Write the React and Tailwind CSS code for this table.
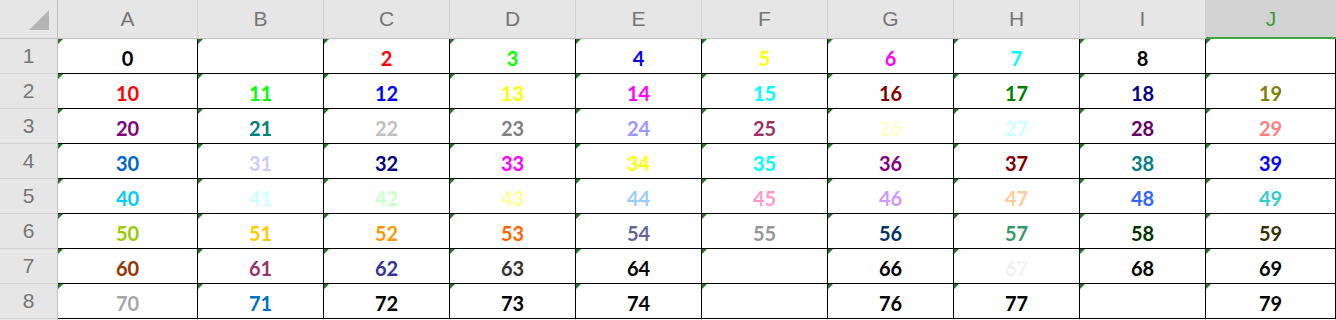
import React from 'react';

const cols = ['A', 'B', 'C', 'D', 'E', 'F', 'G', 'H', 'I', 'J'];

const rows = [
  ['#000000', '#ffffff', '#ff0000', '#00ff00', '#0000ff', '#ffff00', '#ff00ff', '#00ffff', '#000000', '#ffffff'],
  ['#ff0000', '#00ff00', '#0000ff', '#ffff00', '#ff00ff', '#00ffff', '#800000', '#008000', '#000080', '#808000'],
  ['#800080', '#008080', '#c0c0c0', '#808080', '#9999ff', '#993366', '#ffffcc', '#ccffff', '#660066', '#ff8080'],
  ['#0066cc', '#ccccff', '#000080', '#ff00ff', '#ffff00', '#00ffff', '#800080', '#800000', '#008080', '#0000ff'],
  ['#00ccff', '#ccffff', '#ccffcc', '#ffff99', '#99ccff', '#ff99cc', '#cc99ff', '#ffcc99', '#3366ff', '#33cccc'],
  ['#99cc00', '#ffcc00', '#ff9900', '#ff6600', '#666699', '#969696', '#003366', '#339966', '#003300', '#333300'],
  ['#993300', '#993366', '#333399', '#333333', '#000000', '#ffffff', '#000000', '#f2f2f2', '#000000', '#000000'],
  ['#a6a6a6', '#0070c0', '#000000', '#000000', '#000000', '#ffffff', '#000000', '#000000', '#ffffff', '#000000'],
];

function Cell({ value, color }) {
  return (
    <div className="relative h-[35px] border-r border-b border-black flex items-center justify-center pt-[3px]">
      <span className="absolute left-0 top-0 w-0 h-0 border-t-[5px] border-r-[5px] border-t-[#1e7b1e] border-r-transparent" />
      <span
        className="font-['Lato',sans-serif] font-bold text-[20px] leading-none"
        style={{ color }}
      >
        {value}
      </span>
    </div>
  );
}

export default function App() {
  return (
    <div className="w-[1336px] h-[320px] overflow-hidden bg-white">
      <div className="grid grid-cols-[58px_140px_repeat(8,126px)_1fr]">
        {/* corner */}
        <div className="h-[39px] bg-[#e6e6e6] border-r border-b border-[#c2c2c2] relative">
          <svg className="absolute left-[29px] top-[10px]" width="20" height="20" viewBox="0 0 20 20">
            <polygon points="20,0 20,20 0,20" fill="#b4b4b4" />
          </svg>
        </div>
        {cols.map((c) =>
          c === 'J' ? (
            <div
              key={c}
              className="h-[39px] bg-[#d2d2d2] border-b-2 border-[#3fa33f] flex items-center justify-center font-['Liberation_Sans',sans-serif] text-[21px] text-[#3a9a3a]"
            >
              {c}
            </div>
          ) : (
            <div
              key={c}
              className="h-[39px] bg-[#e6e6e6] border-r border-b border-r-[#d0d0d0] border-b-[#c2c2c2] flex items-center justify-center font-['Liberation_Sans',sans-serif] text-[21px] text-[#767676]"
            >
              {c}
            </div>
          )
        )}

        {rows.map((colors, r) => (
          <React.Fragment key={r}>
            <div className="h-[35px] bg-[#e6e6e6] border-r border-b border-r-[#c2c2c2] border-b-[#d4d4d4] flex items-center justify-center font-['Liberation_Sans',sans-serif] text-[21px] text-[#767676]">
              {r + 1}
            </div>
            {colors.map((color, c) => (
              <Cell key={c} value={String(r * 10 + c)} color={color} />
            ))}
          </React.Fragment>
        ))}

        <div className="h-[35px] bg-[#e6e6e6] border-r border-[#c2c2c2]" />
        {cols.map((c) => (
          <div key={c} className="h-[35px] border-r border-[#d4d4d4]" />
        ))}
      </div>
    </div>
  );
}
